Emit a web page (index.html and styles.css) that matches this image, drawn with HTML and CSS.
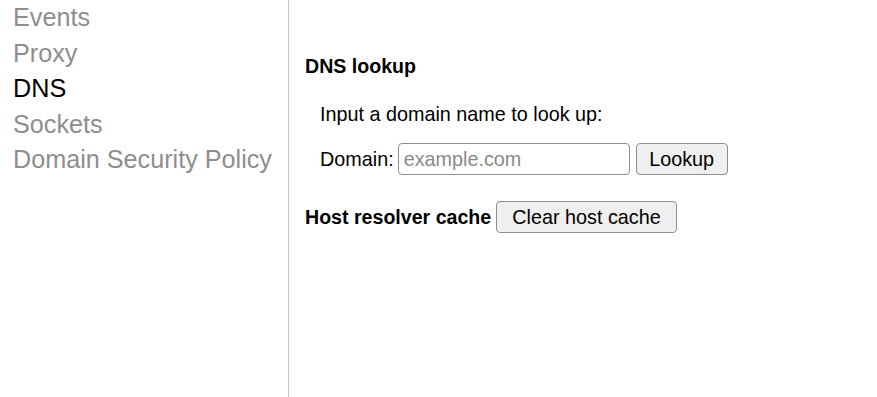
FILE: index.html
```html
<!DOCTYPE html>
<html lang="en">
<head>
    <meta charset="UTF-8">
    <meta name="viewport" content="width=device-width, initial-scale=1.0">
    <title>DNS</title>
    <link rel="stylesheet" href="styles.css">
</head>
<body>
    <div class="sidebar">
        <div class="tab">Events</div>
        <div class="tab">Proxy</div>
        <div class="tab selected">DNS</div>
        <div class="tab">Sockets</div>
        <div class="tab">Domain Security Policy</div>
    </div>
    <div class="content">
        <h4>DNS lookup</h4>
        <div class="lookup">
            <p>Input a domain name to look up:</p>
            <form class="row">
                <label for="domain">Domain:</label>
                <input type="text" id="domain" placeholder="example.com">
                <button type="button" class="lookup-btn">Lookup</button>
            </form>
        </div>
        <div class="row cache">
            <h4>Host resolver cache</h4>
            <button type="button" class="clear-btn">Clear host cache</button>
        </div>
    </div>
</body>
</html>
```

FILE: styles.css
```css
* {
    margin: 0;
    padding: 0;
    box-sizing: border-box;
    font-family: "Liberation Sans", Arial, sans-serif;
}

body {
    display: flex;
    height: 100vh;
    background: #fff;
    color: #000;
    overflow: hidden;
}

.sidebar {
    width: 289px;
    flex-shrink: 0;
    border-right: 1px solid #c6c6c6;
    padding: 0 0 0 13px;
}

.tab {
    font-size: 25.2px;
    line-height: 35.5px;
    color: #8e8e8e;
    white-space: nowrap;
}

.tab.selected {
    color: #000;
}

.content {
    padding: 55px 0 0 16px;
    font-size: 19.8px;
}

h4 {
    font-size: 19.6px;
    font-weight: bold;
}

.lookup {
    padding: 23px 0 0 15px;
}

.lookup p {
    line-height: 26px;
}

.row {
    display: flex;
    align-items: center;
    gap: 6px;
}

.lookup .row {
    margin-top: 16px;
    gap: 4px;
}

input {
    width: 232px;
    height: 32px;
    font-size: 19.8px;
    padding: 0 5px;
    border: 1.5px solid #8f8f8f;
    border-radius: 4px;
    color: #000;
}

input::placeholder {
    color: #8a8a8a;
}

button {
    height: 32px;
    font-size: 19.8px;
    padding: 0 12.5px;
    background: #efefef;
    border: 1.5px solid #8f8f8f;
    border-radius: 4px;
    color: #000;
}

.lookup-btn {
    margin-left: 2px;
}

.clear-btn {
    padding: 0 15px;
}

.cache {
    margin-top: 26px;
    gap: 5px;
}
```
